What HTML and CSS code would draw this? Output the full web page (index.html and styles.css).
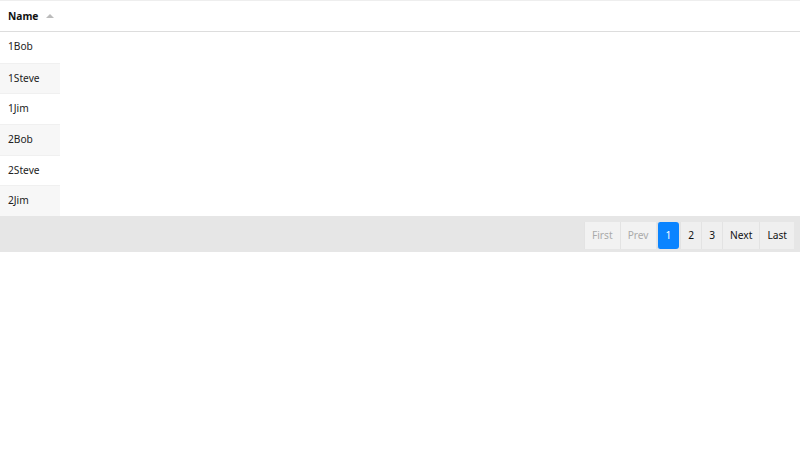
FILE: index.html
```html
<!DOCTYPE html>
<html lang="en">
<head>
    <meta charset="UTF-8">
    <title>Grid</title>
    <link rel="stylesheet" href="styles.css">
</head>
<body>

    <div class="grid">
        <div class="grid-head">
            <span class="col-title">Name</span>
            <span class="sort-arrow"></span>
        </div>

        <div class="grid-body">
            <div class="row">1Bob</div>
            <div class="row alt">1Steve</div>
            <div class="row">1Jim</div>
            <div class="row alt">2Bob</div>
            <div class="row">2Steve</div>
            <div class="row alt">2Jim</div>
        </div>

        <div class="pager">
            <button class="disabled">First</button>
            <button class="disabled">Prev</button>
            <button class="active">1</button>
            <button>2</button>
            <button>3</button>
            <button>Next</button>
            <button>Last</button>
        </div>
    </div>

</body>
</html>
```

FILE: styles.css
```css
body {
    margin: 0;
    font-family: "Noto Sans", "Open Sans", sans-serif;
    font-size: 10.2px;
    color: #222;
    background-color: white;
}
.grid-head {
    display: flex;
    align-items: center;
    height: 30px;
    padding-left: 8px;
    border-top: 1px solid #eee;
    border-bottom: 1px solid #ddd;
}
.col-title {
    font-weight: bold;
    color: #111;
}
.sort-arrow {
    margin-left: 8px;
    margin-top: -1px;
    width: 0;
    height: 0;
    border-left: 4px solid transparent;
    border-right: 4px solid transparent;
    border-bottom: 4px solid #bbb;
}
.grid-body {
    width: 60px;
}
.row {
    height: 29.67px;
    line-height: 29.67px;
    padding-left: 8px;
    border-top: 1px solid #f0f0f0;
}
.row:first-child {
    border-top: none;
    height: 30.67px;
}
.row.alt {
    background-color: #f7f7f7;
}
.pager {
    display: flex;
    justify-content: flex-end;
    align-items: flex-start;
    height: 30px;
    padding: 6px 6px 0 0;
    background-color: #e6e6e6;
}
.pager button {
    font-family: inherit;
    font-size: 10.2px;
    height: 27px;
    padding: 0 7px;
    border: none;
    border-left: 1px solid #e3e3e3;
    background-color: #efefef;
    color: #111;
}
.pager button.disabled {
    color: #aaa;
    background-color: #f2f2f2;
}
.pager button.active {
    background-color: #0a84ff;
    color: white;
    border-radius: 3px;
    padding: 0 8px;
    margin: 0 1px;
}
```
